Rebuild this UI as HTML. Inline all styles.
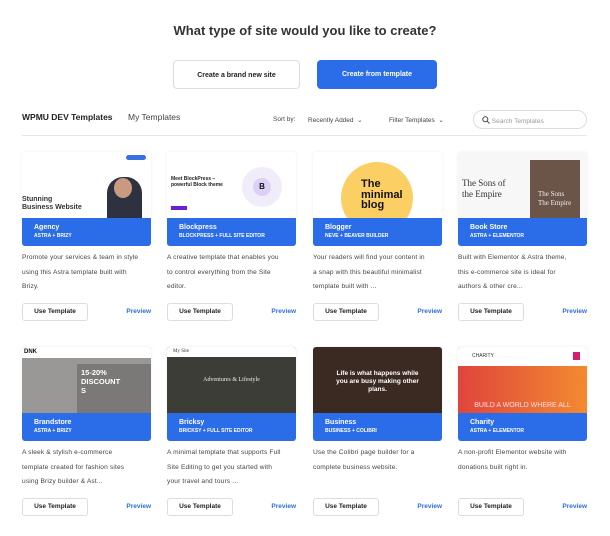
<!DOCTYPE html>
<html><head><meta charset="utf-8"><style>
*{box-sizing:border-box;margin:0;padding:0}
body{width:610px;height:536px;background:#fff;font-family:"Liberation Sans",sans-serif;position:relative;overflow:hidden;color:#333}
.a{position:absolute}
.title{left:0;width:610px;top:23px;text-align:center;font-size:13px;font-weight:bold;color:#333}
.btn{top:60px;height:29px;border-radius:4px;font-size:7px;font-weight:bold;text-align:center;line-height:29px}
.card{width:129px}
.img{position:absolute;left:0;top:0;width:129px;height:66px;overflow:hidden;border-radius:3px 3px 0 0;box-shadow:0 0 3px rgba(0,0,0,.08)}
.band{position:absolute;left:0;top:66px;width:129px;height:28px;background:#2b6de8;border-radius:0 0 3px 3px;color:#fff;padding:6px 0 0 12px}
.band b{display:block;font-size:7px}
.band span{display:block;font-size:5px;font-weight:bold;margin-top:2px}
.desc{position:absolute;left:0;top:99px;width:140px;font-size:6.6px;letter-spacing:.15px;line-height:14.5px;color:#444;white-space:nowrap}
.use{position:absolute;left:0;top:151px;width:66px;height:18px;border:1px solid #ddd;border-radius:3px;font-size:6.5px;font-weight:bold;text-align:center;line-height:16px;color:#222}
.pre{position:absolute;right:0;top:156px;font-size:6.5px;font-weight:bold;color:#2b6de8}
</style></head><body>
<div class="a title">What type of site would you like to create?</div>
<div class="a btn" style="left:173px;width:127px;border:1px solid #ddd;color:#222">Create a brand new site</div>
<div class="a btn" style="left:317px;width:120px;background:#2b6de8;color:#fff">Create from template</div>

<div class="a" style="left:22px;top:112px;font-size:8.5px;font-weight:bold;color:#222">WPMU DEV Templates</div>
<div class="a" style="left:128px;top:112px;font-size:8.5px;color:#444">My Templates</div>
<div class="a" style="left:273px;top:116px;font-size:6.5px;color:#444">Sort by:</div>
<div class="a" style="left:308px;top:116px;font-size:6.5px;color:#444">Recently Added &nbsp;⌄</div>
<div class="a" style="left:389px;top:116px;font-size:6.5px;color:#444">Filter Templates &nbsp;⌄</div>
<div class="a" style="left:473px;top:110px;width:114px;height:19px;border:1px solid #ddd;border-radius:10px;font-size:6.5px;color:#999;padding:5px 0 0 8px">
<svg width="8" height="8" viewBox="0 0 8 8" style="vertical-align:-1px"><circle cx="3.3" cy="3.3" r="2.5" fill="none" stroke="#444" stroke-width="1"/><path d="M5.2 5.2L7.5 7.5" stroke="#444" stroke-width="1"/></svg>&nbsp;Search Templates</div>
<div class="a" style="left:22px;top:135px;width:565px;height:1px;background:#e6e6e6"></div>

<!-- row 1 -->
<div class="a card" style="left:22px;top:152px">
<div class="img" style="background:#fff"><div class="a" style="left:0;top:44px;font-size:7px;font-weight:bold;color:#333;line-height:8px">Stunning<br>Business Website</div><div class="a" style="left:85px;top:25px;width:35px;height:41px;background:#2d3140;border-radius:16px 16px 0 0"></div><div class="a" style="left:92px;top:26px;width:18px;height:20px;background:#c99a80;border-radius:50%"></div><div class="a" style="left:104px;top:3px;width:20px;height:5px;background:#3a6fe0;border-radius:3px"></div></div>
<div class="band"><b>Agency</b><span>ASTRA + BRIZY</span></div>
<div class="desc">Promote your services &amp; team in style<br>using this Astra template built with<br>Brizy.</div>
<div class="use">Use Template</div><div class="pre">Preview</div></div>

<div class="a card" style="left:167px;top:152px">
<div class="img" style="background:#fff"><div class="a" style="left:4px;top:24px;font-size:5px;font-weight:bold;color:#222;line-height:6px">Meet BlockPress –<br>powerful Block theme</div><div class="a" style="left:4px;top:54px;width:16px;height:4px;background:#6a1fd0"></div><div class="a" style="left:75px;top:15px;width:40px;height:40px;background:#f1ecfa;border-radius:50%"></div><div class="a" style="left:86px;top:26px;width:18px;height:18px;background:#ddd0f5;border-radius:50%;font-size:8px;font-weight:bold;text-align:center;line-height:18px;color:#111">B</div></div>
<div class="band"><b>Blockpress</b><span>BLOCKPRESS + FULL SITE EDITOR</span></div>
<div class="desc">A creative template that enables you<br>to control everything from the Site<br>editor.</div>
<div class="use">Use Template</div><div class="pre">Preview</div></div>

<div class="a card" style="left:313px;top:152px">
<div class="img" style="background:#fff"><div class="a" style="left:28px;top:10px;width:72px;height:72px;background:#fbcf63;border-radius:50%"></div><div class="a" style="left:48px;top:27px;font-size:11px;font-weight:bold;color:#111;line-height:10.5px">The<br>minimal<br>blog</div></div>
<div class="band"><b>Blogger</b><span>NEVE + BEAVER BUILDER</span></div>
<div class="desc">Your readers will find your content in<br>a snap with this beautiful minimalist<br>template built with ...</div>
<div class="use">Use Template</div><div class="pre">Preview</div></div>

<div class="a card" style="left:458px;top:152px">
<div class="img" style="background:#f7f7f7"><div class="a" style="left:4px;top:26px;font-family:'Liberation Serif',serif;font-size:9px;color:#333;line-height:11px">The Sons of<br>the Empire</div><div class="a" style="left:72px;top:8px;width:50px;height:58px;background:#6b5548"></div><div class="a" style="left:80px;top:38px;font-family:'Liberation Serif',serif;font-size:7px;color:#eee;line-height:9px">The Sons<br>The Empire</div></div>
<div class="band"><b>Book Store</b><span>ASTRA + ELEMENTOR</span></div>
<div class="desc">Built with Elementor &amp; Astra theme,<br>this e-commerce site is ideal for<br>authors &amp; other cre...</div>
<div class="use">Use Template</div><div class="pre">Preview</div></div>

<!-- row 2 -->
<div class="a card" style="left:22px;top:347px">
<div class="img" style="background:#9a9896"><div class="a" style="left:0;top:0;width:129px;height:11px;background:#fff;font-size:6px;font-weight:bold;padding:2px 2px;color:#111">DNK</div><div class="a" style="left:55px;top:17px;width:74px;height:49px;background:#7b7977;color:#fff;font-size:7.5px;font-weight:bold;padding:4px 4px;line-height:9px">15-20%<br>DISCOUNT<br>S</div></div>
<div class="band"><b>Brandstore</b><span>ASTRA + BRIZY</span></div>
<div class="desc">A sleek &amp; stylish e-commerce<br>template created for fashion sites<br>using Brizy builder &amp; Ast...</div>
<div class="use">Use Template</div><div class="pre">Preview</div></div>

<div class="a card" style="left:167px;top:347px">
<div class="img" style="background:#3b3d36"><div class="a" style="left:0;top:0;width:129px;height:10px;background:#fff;font-family:'Liberation Serif',serif;font-size:5px;padding:2px 6px;color:#333">My Site</div><div class="a" style="left:0;top:30px;width:129px;text-align:center;font-family:'Liberation Serif',serif;font-size:6px;color:#eee">Adventures &amp; Lifestyle</div></div>
<div class="band"><b>Bricksy</b><span>BRICKSY + FULL SITE EDITOR</span></div>
<div class="desc">A minimal template that supports Full<br>Site Editing to get you started with<br>your travel and tours ...</div>
<div class="use">Use Template</div><div class="pre">Preview</div></div>

<div class="a card" style="left:313px;top:347px">
<div class="img" style="background:#3a2a22"><div class="a" style="left:0;top:23px;width:129px;text-align:center;font-size:6.5px;font-weight:bold;color:#fff;line-height:8px">Life is what happens while<br>you are busy making other<br>plans.</div></div>
<div class="band"><b>Business</b><span>BUSINESS + COLIBRI</span></div>
<div class="desc">Use the Colibri page builder for a<br>complete business website.</div>
<div class="use">Use Template</div><div class="pre">Preview</div></div>

<div class="a card" style="left:458px;top:347px">
<div class="img" style="background:linear-gradient(90deg,#e0453c,#f28a30)"><div class="a" style="left:0;top:0;width:129px;height:19px;background:#fff;font-size:5px;padding:6px 14px;color:#333">CHARITY</div><div class="a" style="left:115px;top:5px;width:7px;height:8px;background:#d0206f"></div><div class="a" style="left:0;top:55px;width:129px;text-align:center;font-size:7px;color:#fde">BUILD A WORLD WHERE ALL</div></div>
<div class="band"><b>Charity</b><span>ASTRA + ELEMENTOR</span></div>
<div class="desc">A non-profit Elementor website with<br>donations built right in.</div>
<div class="use">Use Template</div><div class="pre">Preview</div></div>
</body></html>
